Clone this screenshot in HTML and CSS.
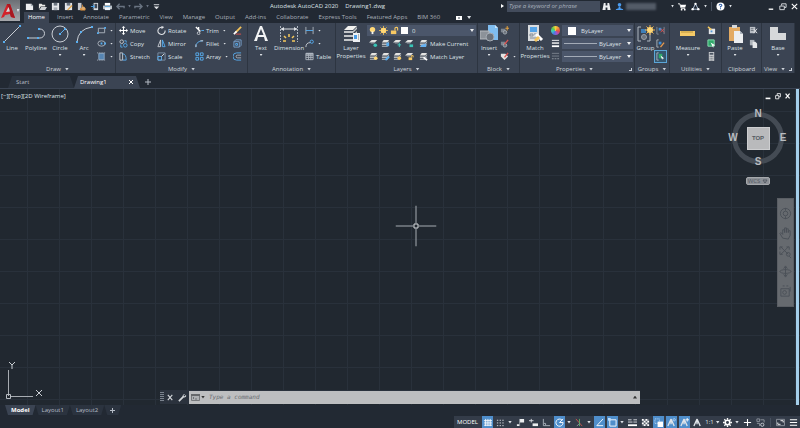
FILE: index.html
```html
<!DOCTYPE html>
<html lang="en">
<head>
  <meta charset="UTF-8" />
  <title>Autodesk AutoCAD 2020 - Drawing1.dwg</title>
  <meta name="viewport" content="width=device-width, initial-scale=1.0" />
  <link rel="stylesheet" href="styles.css">
</head>
<body>
  <!-- shared icons -->
  <svg class="sprite" aria-hidden="true">
    <symbol id="layers" viewBox="0 0 10 10">
      <path d="M3 1h6L7 4H1z" fill="#e4e4e2"/><path d="M1 5h6l2-3v1.500L7 7H1zM1 8h6l2-3v1L7 9H1z" fill="#b5b9bd"/>
    </symbol>
    <symbol id="sheet" viewBox="0 0 10 10">
      <path d="M3 1h6L6.500 4H0z" fill="#e4e4e2"/><path d="M2 4.500h4" stroke="#9aa0a8"/>
    </symbol>
    <symbol id="person" viewBox="0 0 10 10">
      <path d="M4.500 1 L1 9 M4.500 1 L8 9 M4.500 2v5" stroke="currentColor" stroke-width="1.500" fill="none"/>
    </symbol>
  </svg>

  <header class="top">
    <button class="app-button" aria-label="Application menu">
      <svg width="15" height="16" viewBox="0 0 15 16"><path d="M0 15 6 1h3l5 14-4-1-1-3-5 1-1 2z" fill="#d3222a"/><path d="M6 1h3l5 14-4-1z" fill="#a81820"/><path d="m5 9 2.500-5L9 8.500z" fill="#d8d8da"/></svg>
      <i class="caret"></i>
    </button>
    <div class="top-rows">
      <div class="title-bar">
        <div class="quick">
          <button aria-label="New"><svg viewBox="0 0 10 10"><path d="M1 2h6l2 2v5H1z" fill="#eceef0"/><path d="M7 2v2h2" stroke="#8e959e" fill="none"/></svg></button>
          <button aria-label="Open"><svg viewBox="0 0 10 10"><path d="M1 2h3l1 1h3v2H3L1 8z" fill="#e9e9e6"/><path d="M3.500 5.500H10L8 9H1.500z" fill="#cfd2d5"/></svg></button>
          <button aria-label="Save"><svg viewBox="0 0 10 10"><path d="M1 1h8v8H1z" fill="#e3e5e8"/><path d="M3 1h4v3H3z" fill="#6c7580"/><path d="M3 6h4v3H3z" fill="#a5abb3"/></svg></button>
          <button aria-label="Save as"><svg viewBox="0 0 10 10"><path d="M1 1h8v8H1z" fill="#e3e5e8"/><path d="M3 1h4v3H3z" fill="#6c7580"/><path d="m4 9 5-5" stroke="#e3a94f" stroke-width="1.500"/></svg></button>
          <button aria-label="Open from web"><svg viewBox="0 0 10 10"><path d="M1 1h4v8H1z" fill="#c6cacf"/><path d="M4 7h5v2H4zM6 3v3" fill="#d98f3d" stroke="#d98f3d"/><circle cx="7" cy="7" r="2" fill="#e0ab6b"/></svg></button>
          <button aria-label="Save to mobile"><svg viewBox="0 0 10 10"><path d="M4 1h5v8H4z" fill="#d6d9dc"/><path d="M5 2h3v5H5z" fill="#3d4653"/><path d="M1 5h4M3 3l2 2-2 2" stroke="#4ea4e8" fill="none"/></svg></button>
          <button aria-label="Plot"><svg viewBox="0 0 10 10"><path d="M2 1h6v3H2z" fill="#fff"/><path d="M0 4h10v4H0z" fill="#bac0c6"/><path d="M2 6h6v3H2z" fill="#f2f8ff"/><path d="M2 5h6" stroke="#5fa7df"/></svg></button>
          <button aria-label="Undo" class="dim"><svg viewBox="0 0 10 10"><path d="M4 2 1 5l3 3M1 5h8v2" stroke="currentColor" stroke-width="1.500" fill="none"/></svg></button>
          <i class="caret dim"></i>
          <button aria-label="Redo" class="dim"><svg viewBox="0 0 10 10"><path d="m6 2 3 3-3 3M9 5H1v2" stroke="currentColor" stroke-width="1.500" fill="none"/></svg></button>
          <i class="caret dim"></i>
          <button aria-label="Customize toolbar"><svg viewBox="0 0 10 10"><path d="M2 3h6" stroke="#dfe2e6"/><path d="M2 5h6L5 8z" fill="#dfe2e6"/></svg></button>
        </div>
        <div class="title"><span>Autodesk AutoCAD 2020</span><span>Drawing1.dwg</span></div>
        <div class="search">
          <i class="play"></i>
          <input type="text" placeholder="Type a keyword or phrase" aria-label="Search">
        </div>
        <div class="account">
          <button aria-label="Find"><svg viewBox="0 0 10 10"><path d="M2 1h2v3h2V1h2l1.500 8H6V6H4v3H.500z" fill="#eceef0"/></svg></button>
          <button aria-label="Account"><svg viewBox="0 0 10 10"><circle cx="5" cy="3" r="2" fill="#4b9cf0"/><path d="M4 5h2v2l3 1v1H1V8l3-1z" fill="#4b9cf0"/></svg></button>
          <span class="user-name"></span>
          <i class="caret"></i>
          <button aria-label="App store"><svg viewBox="0 0 10 10"><path d="M0 2h2l1.500 5H8" stroke="#fff" fill="none"/><path d="M2.500 3H9L8 6H3.500z" fill="#fff"/><circle cx="4" cy="8.500" r="1" fill="#fff"/><circle cx="7.500" cy="8.500" r="1" fill="#fff"/></svg></button>
          <button aria-label="Autodesk app"><svg viewBox="0 0 10 10"><path d="M5 2 2 8h6z" stroke="#c3d4ec" fill="none"/><circle cx="5" cy="2" r="1.300" fill="#fff"/><circle cx="1.800" cy="8" r="1.300" fill="#fff"/><circle cx="8.200" cy="8" r="1.300" fill="#fff"/></svg></button>
          <i class="caret"></i>
          <i class="divider"></i>
          <button aria-label="Help"><svg viewBox="0 0 10 10"><circle cx="5" cy="5" r="4.500" fill="#fff"/><path d="M3.500 4q0-1.500 1.500-1.500T6.500 4Q6.500 5 5 5v1M5 7v1" stroke="#2e5ea8" stroke-width="1.200" fill="none"/></svg></button>
          <i class="caret"></i>
        </div>
        <div class="window-buttons">
          <button aria-label="Minimize"><svg viewBox="0 0 10 10"><path d="M3 8h5" stroke="#fff" stroke-width="1.500"/></svg></button>
          <button aria-label="Restore"><svg viewBox="0 0 10 10"><path d="M2 4.500h5v4H2zM4 4V2h5v4H7" stroke="#dfe2e6" fill="none"/></svg></button>
          <button aria-label="Close"><svg viewBox="0 0 10 10"><path d="m2 2 6 6m0-6L2 8" stroke="#fff" stroke-width="1.200"/></svg></button>
        </div>
      </div>
      <nav class="menu">
        <a href="#" class="active">Home</a>
        <a href="#">Insert</a>
        <a href="#">Annotate</a>
        <a href="#">Parametric</a>
        <a href="#">View</a>
        <a href="#">Manage</a>
        <a href="#">Output</a>
        <a href="#">Add-ins</a>
        <a href="#">Collaborate</a>
        <a href="#">Express Tools</a>
        <a href="#">Featured Apps</a>
        <a href="#">BIM 360</a>
        <button aria-label="Ribbon display"><svg width="8" height="6" viewBox="0 0 8 6"><path d="M1 1h6v4H1z" fill="#fff"/><path d="M3 3h2" stroke="#3b4453"/></svg><i class="caret"></i></button>
      </nav>
    </div>
  </header>

  <section class="ribbon">
    <div class="panel draw">
      <div class="tools">
        <button class="big"><svg viewBox="0 0 18 18"><path d="M1 17 17 1" stroke="#c9ced5"/><path d="M0 16h2v2H0zM16 0h2v2h-2z" fill="#58aef0"/></svg>Line</button>
        <button class="big"><svg viewBox="0 0 18 18"><path d="M1 13h12a4 4 0 0 0 0-9" stroke="#c9ced5" fill="none"/><path d="M0 12h2v2H0zM10 12h2v2h-2zM11 3h2v2h-2z" fill="#58aef0"/></svg>Polyline</button>
        <button class="big"><svg viewBox="0 0 18 18"><circle cx="9" cy="9" r="8" stroke="#c9ced5" fill="none"/><path d="m9 9 5-5" stroke="#58aef0"/><path d="M8 8h2v2H8zM13 3h2v2h-2z" fill="#58aef0"/></svg>Circle<i class="caret"></i></button>
        <button class="big"><svg viewBox="0 0 18 18"><path d="M2 17Q3 4 17 2" stroke="#c9ced5" fill="none"/><path d="M1 16h2v2H1zM5 6h2v2H5zM16 1h2v2h-2z" fill="#58aef0"/></svg>Arc<i class="caret"></i></button>
        <div class="stack">
          <button aria-label="Rectangle"><svg viewBox="0 0 10 10"><path d="M1.500 2.500h7v5h-7z" stroke="#aeb6c0" fill="none"/><path d="M0 7h2v2H0zM8 1h2v2H8z" fill="#58aef0"/></svg><i class="caret"></i></button>
          <button aria-label="Ellipse"><svg viewBox="0 0 10 10"><ellipse cx="5" cy="5" rx="4" ry="3" stroke="#aeb6c0" fill="none"/><path d="M4 4h2v2H4zM8 4h2v2H8z" fill="#58aef0"/></svg><i class="caret"></i></button>
          <button aria-label="Hatch"><svg viewBox="0 0 10 10"><path d="M2 1.500h6v7H2z" fill="#5685b2" stroke="#8ba7c4"/><path d="M0 1h10M0 9h10" stroke="#aeb6c0" stroke-dasharray="1 1"/></svg><i class="caret"></i></button>
        </div>
      </div>
      <div class="panel-title">Draw<i class="caret"></i></div>
    </div>

    <div class="panel modify">
      <div class="tools">
        <div class="stack">
          <button><svg viewBox="0 0 10 10"><path d="M5 1v8M1 5h8" stroke="#fff" stroke-width="1.200"/><path d="m5 0 2 2H3zM5 10l2-2H3zM0 5l2-2v4zM10 5 8 3v4z" fill="#fff"/></svg>Move</button>
          <button><svg viewBox="0 0 10 10"><circle cx="3" cy="3" r="2" stroke="#c9ced5" fill="none"/><circle cx="7" cy="7" r="2" stroke="#58aef0" fill="none"/><path d="M6 2h2v2M2 6v3h2" stroke="#58aef0" fill="none"/></svg>Copy</button>
          <button><svg viewBox="0 0 10 10"><path d="M1 1h3v8H1z" stroke="#c9ced5" fill="none"/><path d="M4 2q4 0 4 7H4" stroke="#58aef0" fill="none"/></svg>Stretch</button>
        </div>
        <div class="stack">
          <button><svg viewBox="0 0 10 10"><path d="M6 1.500A4 4 0 1 0 9 5" stroke="#dfe2e6" stroke-width="1.200" fill="none"/><path d="M5 0v3.500L8 1z" fill="#dfe2e6"/></svg>Rotate</button>
          <button><svg viewBox="0 0 10 10"><path d="M4 1v7.500H1z" stroke="#c9ced5" fill="none"/><path d="M6 1v7.500h3z" stroke="#58aef0" fill="none"/></svg>Mirror</button>
          <button><svg viewBox="0 0 10 10"><path d="M1 1h8v8H1z" stroke="#7f92a9" fill="none"/><path d="M1 5h4v4H1z" stroke="#58aef0" fill="none"/><path d="m5 5 3-3" stroke="#dfe2e6"/></svg>Scale</button>
        </div>
        <div class="stack">
          <button><svg viewBox="0 0 10 10"><path d="m1 1 5 5M4 1v4" stroke="#fff" stroke-width="1.500"/><circle cx="4" cy="8" r="1.500" stroke="#c9ced5" fill="none"/><path d="M7 5h3" stroke="#58aef0"/></svg>Trim<i class="caret"></i></button>
          <button><svg viewBox="0 0 10 10"><path d="M1 9Q1 2 9 2" stroke="#58aef0" fill="none"/><path d="M1 6v3M6 2h3" stroke="#c9ced5"/></svg>Fillet<i class="caret"></i></button>
          <button><svg viewBox="0 0 10 10"><path d="M1 1h3v3H1zM6 1h3v3H6zM1 6h3v3H1zM6 6h3v3H6z" stroke="#58aef0" fill="none"/></svg>Array<i class="caret"></i></button>
        </div>
        <div class="stack">
          <button aria-label="Erase"><svg viewBox="0 0 10 10"><path d="m3 7 6-6" stroke="#f4c35a" stroke-width="2"/><path d="m1 9 3-3" stroke="#fff" stroke-width="2"/><path d="M3 9h6" stroke="#e0524f"/></svg></button>
          <button aria-label="Explode"><svg viewBox="0 0 10 10"><path d="M1 3h6v6H1zM1 3l2-2h6v6L7 9" stroke="#7aa4cf" fill="none"/><path d="M3 5h2v2H3z" stroke="#58aef0" fill="none"/></svg></button>
          <button aria-label="Offset"><svg viewBox="0 0 10 10"><path d="M9 1H4a4 4 0 0 0 0 8h5" stroke="#58aef0" fill="none"/><path d="M9 3.500H5a1.500 1.500 0 0 0 0 3h4" stroke="#aeb6c0" fill="none"/></svg></button>
        </div>
      </div>
      <div class="panel-title">Modify<i class="caret"></i></div>
    </div>

    <div class="panel annotation">
      <div class="tools">
        <button class="big"><svg viewBox="0 0 18 18"><path d="M8 1h2l6 15h-3l-1-4H6l-1 4H2zm1 3-2.500 6h5z" fill="#f3f4f5" fill-rule="evenodd"/></svg>Text<i class="caret"></i></button>
        <button class="big"><svg viewBox="0 0 18 18"><path d="M.500 1v16m17-16v16" stroke="#aeb6c0" stroke-dasharray="2 1"/><path d="M1 4h16" stroke="#dfe2e6"/><path d="m1 4 3-2v4zM17 4l-3-2v4z" fill="#dfe2e6"/><path d="M9 9v3M4 11l2 2m8-2-2 2M3 16h3m6 0h3" stroke="#f6c95c" stroke-width="1.500"/></svg>Dimension</button>
        <div class="stack">
          <button aria-label="Linear"><svg viewBox="0 0 10 10"><path d="M1 1v8M9 1v8" stroke="#aeb6c0"/><path d="M1 5h8" stroke="#58aef0"/></svg><i class="caret"></i></button>
          <button aria-label="Leader"><svg viewBox="0 0 10 10"><path d="M1 9q0-5 5-5" stroke="#c9ced5" fill="none"/><circle cx="7.500" cy="3" r="1.800" stroke="#58aef0" fill="none"/></svg><i class="caret"></i></button>
          <button><svg viewBox="0 0 10 10"><path d="M1 1.500h8v7H1zM1 4h8M1 6h8M4 2v7M6.500 2v7" stroke="#aeb6c0" fill="none"/><path d="M1 1h8v2H1z" fill="#aeb6c0"/></svg>Table</button>
        </div>
      </div>
      <div class="panel-title">Annotation<i class="caret"></i></div>
    </div>

    <div class="panel layers">
      <div class="tools">
        <button class="big"><svg viewBox="0 0 18 18"><path d="M6 1h9l-4 4H2z" fill="#f1f1ef"/><path d="M2 6h9l4-4v2l-4 4H2zM2 10h9l4-4v2l-4 4H2zM2 14h9l4-4v2l-4 4H2z" fill="#c2c5c8"/><path d="M11 8h7v9h-7z" fill="#eef1f4"/><path d="M12 10h3v4h-3z" fill="#4c9de6"/><path d="M16 10h1M16 12h1M16 14h1" stroke="#777"/></svg>Layer<br>Properties</button>
        <div class="layer-tools">
          <div class="combo layer-combo">
            <svg viewBox="0 0 10 10"><circle cx="5" cy="4" r="3" fill="#ffd877"/><path d="M4 6h2v3H4z" fill="#f3f3ef"/></svg>
            <svg viewBox="0 0 10 10"><path d="M5 0v10M0 5h10M1.500 1.500l7 7m0-7-7 7" stroke="#e5b54e"/><circle cx="5" cy="5" r="3" fill="#ffd877"/></svg>
            <svg viewBox="0 0 10 10"><path d="M1 5h6v4H1z" fill="#f7c963"/><path d="M5.500 5V2.500q0-1 1.500-1t1.500 1V5" stroke="#f7c963" stroke-width="1.200" fill="none"/></svg>
            <i class="swatch"></i>
            <select aria-label="Layer"><option>0</option></select>
          </div>
          <div class="icon-row">
            <button aria-label="Layer off"><svg viewBox="0 0 10 10"><use href="#sheet"/><circle cx="7" cy="7" r="2" fill="#39c4b6"/></svg></button>
            <button aria-label="Isolate"><svg viewBox="0 0 10 10"><use href="#layers"/><path d="M6 4h3v4H6z" fill="#58aef0"/></svg></button>
            <button aria-label="Freeze"><svg viewBox="0 0 10 10"><use href="#sheet"/><path d="M7 4v5M5 6.500h4" stroke="#42d2c4"/></svg></button>
            <button aria-label="Lock"><svg viewBox="0 0 10 10"><use href="#sheet"/><path d="M5 6h4v3H5z" fill="#39c4b6"/></svg></button>
            <button class="wide"><svg viewBox="0 0 10 10"><use href="#layers"/><path d="m2 7 6-2v4H2z" fill="#66b2f2"/></svg>Make Current</button>
          </div>
          <div class="icon-row">
            <button aria-label="Turn all on"><svg viewBox="0 0 10 10"><use href="#layers"/><circle cx="7.500" cy="7" r="2" fill="#ffd877"/></svg></button>
            <button aria-label="Unisolate"><svg viewBox="0 0 10 10"><use href="#layers"/><path d="m5 9 4-4" stroke="#58aef0" stroke-width="2"/></svg></button>
            <button aria-label="Thaw"><svg viewBox="0 0 10 10"><use href="#layers"/><circle cx="7" cy="7" r="2" fill="#f7c963"/></svg></button>
            <button aria-label="Unlock"><svg viewBox="0 0 10 10"><use href="#sheet"/><path d="M4 6h4v3H4z" fill="#f7c963"/><path d="M7 6V4h2v2" stroke="#f7c963" fill="none"/></svg></button>
            <button class="wide"><svg viewBox="0 0 10 10"><use href="#layers"/><path d="m5 6 4 3" stroke="#fff" stroke-width="2"/></svg>Match Layer</button>
          </div>
        </div>
      </div>
      <div class="panel-title">Layers<i class="caret"></i></div>
    </div>

    <div class="panel block">
      <div class="tools">
        <button class="big"><svg viewBox="0 0 18 18"><path d="M8 0h7l3 3v12H8z" fill="#7fbdf0"/><path d="M15 0v3h3" fill="#c9e3f9"/><path d="M0 6h9v8H0z" fill="#8c9299" stroke="#b6babf"/><circle cx="10" cy="12" r="4" fill="#6c737c" stroke="#a5abb3"/></svg>Insert<i class="caret"></i></button>
        <div class="stack">
          <button aria-label="Create block"><svg viewBox="0 0 10 10"><path d="M1 3h5v4H1z" fill="#7d858f"/><circle cx="5.500" cy="7" r="2" fill="#6c737c" stroke="#a5abb3"/><path d="M8 0v5M6 2.500h4" stroke="#f2a93d"/></svg></button>
          <button aria-label="Edit block"><svg viewBox="0 0 10 10"><path d="M1 3h5v4H1z" fill="#7d858f"/><circle cx="5.500" cy="7" r="2" fill="#6c737c" stroke="#a5abb3"/><path d="m5 6 4-5" stroke="#e0524f" stroke-width="1.500"/></svg></button>
          <button aria-label="Edit attributes"><svg viewBox="0 0 10 10"><path d="M1 2h5l3 3-4 4-4-4z" fill="#e4e4e2"/><path d="m5 6 4-5" stroke="#e0524f" stroke-width="1.500"/></svg><i class="caret"></i></button>
        </div>
      </div>
      <div class="panel-title">Block<i class="caret"></i></div>
    </div>

    <div class="panel properties">
      <div class="tools">
        <button class="big"><svg viewBox="0 0 18 18"><path d="M2 0h11v16H2z" fill="#d9dcdf"/><path d="M4 2h7v5H4z" fill="#55a4e8"/><path d="M4 9h3v2H4zM8 9h3M4 13h7" stroke="#858c95" fill="none"/><path d="m10 9 6 6" stroke="#fff" stroke-width="3"/><path d="m9 16 4-4" stroke="#f4c35a" stroke-width="3"/></svg>Match<br>Properties</button>
        <div class="property-rows">
          <div class="property-row">
            <i class="color-wheel"></i>
            <div class="combo"><i class="swatch"></i><select aria-label="Color"><option>ByLayer</option></select></div>
          </div>
          <div class="property-row">
            <svg viewBox="0 0 10 10"><path d="M1 1.500h8" stroke="#fff"/><path d="M1 4.500h8" stroke="#fff" stroke-width="1.500"/><path d="M1 8h8" stroke="#fff" stroke-width="2"/></svg>
            <div class="combo"><i class="line"></i><select aria-label="Lineweight"><option>ByLayer</option></select></div>
          </div>
          <div class="property-row">
            <svg viewBox="0 0 10 10"><path d="M1 1.500h8M1 4.500h8" stroke="#7d858f"/><path d="M1 7.500h8" stroke="#949ba4" stroke-dasharray="2 1"/></svg>
            <div class="combo"><i class="line"></i><select aria-label="Linetype"><option>ByLayer</option></select></div>
          </div>
        </div>
      </div>
      <div class="panel-title">Properties<i class="caret"></i><i class="launcher"></i></div>
    </div>

    <div class="panel groups">
      <div class="tools">
        <button class="big"><svg viewBox="0 0 18 18"><path d="M4 2H1v14h3M10 16h3V8" stroke="#aeb6c0" fill="none"/><path d="M4 4h5v4H4z" fill="#3f7fb8"/><circle cx="7" cy="12" r="2.500" fill="#6c737c" stroke="#9aa0a8"/><path d="M13 0v10M8 5h10M9.500 1.500l7 7m0-7-7 7" stroke="#f0b650"/><circle cx="13" cy="5" r="3" fill="#ffd877"/></svg>Group</button>
        <div class="stack">
          <button aria-label="Ungroup"><svg viewBox="0 0 10 10"><path d="M1 1v8h2M9 1v8" stroke="#7f8a98" fill="none"/><path d="M3 2h3v3H3z" fill="#3f8fd8"/><path d="m5 3 4 4m0-4L5 7" stroke="#e0524f"/></svg></button>
          <button aria-label="Group edit"><svg viewBox="0 0 10 10"><path d="M3 1H1v8h2" stroke="#aeb6c0" fill="none"/><path d="M3 3h3v3H3z" fill="#3f8fd8"/><path d="m5 9 4-5" stroke="#e89a4d" stroke-width="1.500"/></svg></button>
          <button aria-label="Group selection" class="on"><svg viewBox="0 0 10 10"><path d="M3 1H1v8h2" stroke="#aeb6c0" fill="none"/><path d="M3 2h4v5H3z" fill="#2fa86a"/><path d="m5 4 4 3-2 .500V9z" fill="#fff"/></svg></button>
        </div>
      </div>
      <div class="panel-title">Groups<i class="caret"></i></div>
    </div>

    <div class="panel utilities">
      <div class="tools">
        <button class="big"><svg viewBox="0 0 18 18"><path d="M1 6h15v5H1z" fill="#f5ca67"/><path d="M3 6v2m2-2v2m2-2v2m2-2v2m2-2v2m2-2v2" stroke="#a7812d" stroke-width=".7"/></svg>Measure<i class="caret"></i></button>
        <div class="stack">
          <button aria-label="Quick select"><svg viewBox="0 0 10 10"><path d="M2 3h7v6H2z" fill="#e3e5e8"/><path d="m1 1 4 3" stroke="#f6c95c" stroke-width="1.500"/><path d="M4 5h2v2H4z" fill="#4f96d6"/></svg></button>
          <button aria-label="Select all"><svg viewBox="0 0 10 10"><path d="M1 1h7v7H1z" fill="#2fa86a" stroke="#8de0b4"/><path d="m4 4 5 3-2 .500V10z" fill="#fff"/></svg></button>
          <button aria-label="Calculator"><svg viewBox="0 0 10 10"><path d="M2 0h6v10H2z" fill="#c4c7cb"/><path d="M3 1h4v2H3z" fill="#4b5563"/><path d="M3 5h4M3 7h4M3 9h4" stroke="#6c737c" stroke-dasharray="1 .500"/></svg></button>
        </div>
      </div>
      <div class="panel-title">Utilities<i class="caret"></i></div>
    </div>

    <div class="panel clipboard">
      <div class="tools">
        <button class="big"><svg viewBox="0 0 18 18"><path d="M3 2h11v14H3z" fill="#e3aa62"/><path d="M6 0h5v3H6z" fill="#d6d9dc"/><path d="M8 6h6l3 3v9H8z" fill="#eceef0"/><path d="M14 6v3h3" fill="#aeb6c0"/></svg>Paste<i class="caret"></i></button>
        <div class="stack">
          <button aria-label="Cut"><svg viewBox="0 0 10 10"><path d="M1 1h6v7H1z" fill="#b9bec5"/><path d="m5 3 4 5m0-5L5 8" stroke="#e6e8ea"/><path d="M2 3h3M2 5h3" stroke="#6c737c"/></svg></button>
          <button aria-label="Copy clip"><svg viewBox="0 0 10 10"><path d="M1 1h5v6H1z" fill="#aeb4bb"/><path d="M4 3h3l2 2v5H4z" fill="#e6e8ea"/></svg></button>
        </div>
      </div>
      <div class="panel-title">Clipboard</div>
    </div>

    <div class="panel view">
      <div class="tools">
        <button class="big"><svg viewBox="0 0 18 18"><path d="M1 2h8v6h8v7H1z" fill="#d6d8da"/></svg>Base<i class="caret"></i></button>
      </div>
      <div class="panel-title">View<i class="caret"></i><i class="launcher"></i></div>
    </div>
  </section>

  <nav class="file-tabs">
    <a href="#" class="file-tab">Start</a>
    <a href="#" class="file-tab active">Drawing1 <svg width="6" height="6" viewBox="0 0 6 6"><path d="m1 1 4 4m0-4L1 5" stroke="currentColor"/></svg></a>
    <button aria-label="New drawing"><svg width="6" height="6" viewBox="0 0 6 6"><path d="M3 0v6M0 3h6" stroke="currentColor"/></svg></button>
  </nav>

  <main class="canvas">
    <div class="view-label">[−][Top][2D Wireframe]</div>
    <div class="doc-buttons">
      <button aria-label="Minimize drawing"><svg viewBox="0 0 10 10"><path d="M2 8h6" stroke="#fff" stroke-width="2"/></svg></button>
      <button aria-label="Restore drawing"><svg viewBox="0 0 10 10"><path d="M2 4.500h4v4H2zM4 4V2h4v4H6" stroke="#fff" fill="none"/></svg></button>
      <button aria-label="Close drawing"><svg viewBox="0 0 10 10"><path d="m2 2 5 6m0-6L2 8" stroke="#fff" stroke-width="1.500"/></svg></button>
    </div>

    <div class="view-cube">
      <span class="north">N</span><span class="west">W</span><button>TOP</button><span class="east">E</span><span class="south">S</span>
    </div>
    <button class="wcs">WCS <svg width="6" height="5" viewBox="0 0 6 5"><path d="M1 1h4L3 4z" stroke="currentColor" fill="none"/></svg></button>

    <div class="nav-bar">
      <button aria-label="Wheel"><svg viewBox="0 0 14 14"><circle cx="7" cy="7" r="5.500"/><circle cx="7" cy="7" r="2.500"/><path d="M7 1v3M7 10v3"/></svg></button>
      <button aria-label="Pan"><svg viewBox="0 0 14 14"><path d="M4 12 1 7l1-1 2 2V3h2v3-5h2v5-4h2v4-2h2v5l-2 4z"/></svg></button>
      <button aria-label="Zoom"><svg viewBox="0 0 14 14"><path d="m2 1 8 8M10 1 2 9M1 4V1h3M8 1h3v3M1 6v3h3"/><circle cx="10" cy="9" r="2"/><path d="m11 11 2 2"/></svg></button>
      <button aria-label="Orbit"><svg viewBox="0 0 14 14"><ellipse cx="7" cy="7" rx="6" ry="2"/><path d="M7 2v10M5 4l2-3 2 3M5 10l2 3 2-3"/></svg></button>
      <button aria-label="Show motion"><svg viewBox="0 0 14 14"><path d="M2 4h9v8H2z"/><circle cx="6" cy="8" r="2"/><path d="M4 1h2M8 1h2M12 2v5"/></svg></button>
    </div>

    <svg class="crosshair" width="41" height="41" viewBox="0 0 41 41"><path d="M20.500 0v18m0 5v18M0 20.500h18m5 0h18" stroke="#a7acb2"/><path d="M18.500 18.500h4v4h-4z" stroke="#d7dadd" fill="none"/></svg>
    <svg class="ucs" width="40" height="40" viewBox="0 0 40 40"><path d="M3.500 8v26M6 34.500h22" stroke="#a7acb2"/><path d="M1.500 32.500h4v4h-4z" stroke="#b9bec4" fill="none"/><path d="m4 0 3 3 3-3M7 3v4M31 28l6 6m0-6-6 6" stroke="#c9ced3" fill="none"/></svg>

    <div class="command">
      <i class="grip"></i>
      <button aria-label="Close command line"><svg viewBox="0 0 10 10"><path d="m2 2 5 6m0-6L2 8" stroke="#d6d9dc" stroke-width="1.200"/></svg></button>
      <button aria-label="Customize command line"><svg viewBox="0 0 10 10"><path d="m1 9 5-5" stroke="#d6d9dc" stroke-width="1.800"/><path d="M9 2 7 4 6 3l2-2q-3 0-3 3 2 2 4 0z" fill="#d6d9dc"/></svg></button>
      <div class="command-box">
        <svg width="9" height="7" viewBox="0 0 9 7"><path d="M.500.500h8v6h-8z" fill="#aeb0b3" stroke="#77797c"/><path d="M0 1h9" stroke="#66686b" stroke-width="2"/><path d="m2 3 1 1-1 1M4 5h2" stroke="#55575a" stroke-width=".7" fill="none"/></svg>
        <i class="caret"></i>
        <input type="text" placeholder="Type a command" aria-label="Command">
        <i class="caret up"></i>
      </div>
    </div>
  </main>

  <footer>
    <nav class="layout-tabs">
      <a href="#" class="active">Model</a>
      <a href="#">Layout1</a>
      <a href="#">Layout2</a>
      <button aria-label="New layout"><svg width="5" height="5" viewBox="0 0 5 5"><path d="M2.500 0v5M0 2.500h5" stroke="currentColor"/></svg></button>
    </nav>
    <div class="status-bar">
      <button class="model">MODEL</button>
      <button class="on" aria-label="Grid"><svg viewBox="0 0 10 10"><path d="M3 1v8M5.500 1v8M8 1v8M1 3h9M1 5.500h9M1 8h9" stroke="#fff"/></svg></button>
      <button aria-label="Snap"><svg viewBox="0 0 10 10"><path d="M1 2.500h8M1 5.500h8M1 8.500h8" stroke="#dfe2e6" stroke-dasharray="1.500 1.500"/></svg></button>
      <i class="caret"></i>
      <button aria-label="Infer"><svg viewBox="0 0 10 10"><path d="M4 1h5v4H4zM1 7h3v2H1z" fill="#eceef0"/><path d="M4 1v8" stroke="#8e959e"/></svg></button>
      <button aria-label="Dynamic input"><svg viewBox="0 0 10 10"><path d="M2.500 1v4M0 3h5" stroke="#dfe2e6"/><path d="M4 6h6v3H4z" fill="#eceef0"/></svg></button>
      <button aria-label="Ortho"><svg viewBox="0 0 10 10"><path d="M1.500 1v7.500H9M2 6h2v2" stroke="#aeb6c0" fill="none"/></svg></button>
      <button class="on" aria-label="Polar"><svg viewBox="0 0 10 10"><path d="M8 2.500A4 4 0 1 0 9 5H5l4-4" stroke="#fff" fill="none"/></svg></button>
      <i class="caret"></i>
      <button aria-label="Isodraft"><svg viewBox="0 0 10 10"><path d="m1 1 7 8" stroke="#c9584f"/><path d="M5 1v8" stroke="#57ad65"/><path d="m2 9 3-3" stroke="#8e959e"/></svg></button>
      <i class="caret"></i>
      <button class="on" aria-label="Tracking"><svg viewBox="0 0 10 10"><path d="M9 1 2 8.500h7" stroke="#fff" fill="none"/></svg></button>
      <button class="on" aria-label="Object snap"><svg viewBox="0 0 10 10"><path d="M2 2h7v7H2z" stroke="#fff" fill="none"/><path d="M0 0h3v3H0z" fill="#b9dcff"/></svg></button>
      <i class="caret"></i>
      <button aria-label="Lineweight"><svg viewBox="0 0 10 10"><path d="M0 2h4M6 2h4M0 4.500h5M6 4.500h4" stroke="#dfe2e6"/><path d="M0 8h10" stroke="#fff" stroke-width="2"/></svg></button>
      <button aria-label="Transparency"><svg viewBox="0 0 10 10"><path d="M1 1h8v8H1z" fill="#59616d"/><path d="M1 1h2v2H1zM5 1h2v2H5zM3 3h2v2H3zM7 3h2v2H7zM1 5h2v2H1zM5 5h2v2H5zM3 7h2v2H3zM7 7h2v2H7z" fill="#fff"/></svg></button>
      <button class="on" aria-label="Selection cycling"><svg viewBox="0 0 10 10"><path d="M1 1h5v5H1z" stroke="#cfe6fb" stroke-dasharray="1 1" fill="none"/><path d="M4 4h6v6H4z" fill="#fff"/></svg></button>
      <button class="on" aria-label="Annotation visibility"><svg viewBox="0 0 10 10"><use href="#person"/><circle cx="8" cy="2" r="1.300" stroke="#d7eaff" stroke-width=".7" fill="none"/></svg></button>
      <button class="on" aria-label="Auto scale"><svg viewBox="0 0 10 10"><use href="#person"/><path d="M8 0v4M6 2h4" stroke="#fff"/></svg></button>
      <button aria-label="Annotation scale"><svg viewBox="0 0 10 10"><use href="#person"/></svg></button>
      <button class="scale">1:1<i class="caret"></i></button>
      <button aria-label="Workspace"><svg viewBox="0 0 10 10"><circle cx="5" cy="5" r="2.500" stroke="#fff" stroke-width="1.700" fill="none"/><path d="M5 0v2M5 8v2M0 5h2M8 5h2M1.500 1.500 3 3M7 7l1.500 1.500M8.500 1.500 7 3M3 7 1.500 8.500" stroke="#fff" stroke-width="1.500"/></svg></button>
      <i class="caret"></i>
      <button aria-label="Annotation monitor"><svg viewBox="0 0 10 10"><path d="M5 1v8M1 5h8" stroke="#fff" stroke-width="1.200"/></svg></button>
      <button aria-label="Isolate objects"><svg viewBox="0 0 10 10"><path d="M1 1h3v3H1zM5 2h4v3M1 6h3v3" stroke="#8e959e" fill="none"/><circle cx="7" cy="7.500" r="1.800" stroke="#c9ced5" fill="none"/></svg></button>
      <i class="divider"></i>
      <button aria-label="Clean screen"><svg viewBox="0 0 10 10"><path d="M.500 1.500h9v7h-9z" stroke="#8e959e" fill="none"/><path d="M5 3h3v2M2 5v2h3" stroke="#fff" fill="none"/></svg></button>
      <button aria-label="Customization"><svg viewBox="0 0 10 10"><path d="M1 2h8M1 5h8M1 8h8" stroke="#fff" stroke-width="1.200"/></svg></button>
    </div>
  </footer>
</body>
</html>
```
FILE: styles.css
```css
* {
  box-sizing: border-box;
}

body {
  margin: 0;
  min-height: 100vh;
  display: flex;
  flex-direction: column;
  background-color: #222933;
  color: #dfe3e8;
  font-family: "Open Sans", "Noto Sans", sans-serif;
  font-size: 6px;
  line-height: 8px;
  overflow: hidden;
}

button,
input,
select {
  font: inherit;
  color: inherit;
  margin: 0;
  padding: 0;
  border: 0;
  background: none;
}

button {
  display: flex;
  align-items: center;
  justify-content: center;
  white-space: nowrap;
}

a {
  color: inherit;
  text-decoration: none;
}

svg {
  flex: none;
  display: block;
}

.sprite {
  position: absolute;
  width: 0;
  height: 0;
}

.caret {
  flex: none;
  width: 4px;
  height: 3px;
  background-color: currentColor;
  clip-path: polygon(0 0, 100% 0, 50% 100%);
}

.caret.up {
  clip-path: polygon(0 100%, 100% 100%, 50% 0);
}

.dim {
  color: #697381;
}

.divider {
  width: 1px;
  height: 9px;
  background-color: #48515f;
}

/* title bar and menu */

.top {
  display: flex;
  height: 23px;
}

.app-button {
  width: 20px;
  height: 21px;
  gap: 1px;
  background: linear-gradient(#6c6f75, #a6a8ac);
}

.app-button .caret {
  width: 3px;
}

.top-rows {
  flex: 1;
  min-width: 0;
}

.title-bar {
  display: flex;
  align-items: center;
  height: 12px;
}

.title-bar svg {
  width: 9px;
  height: 9px;
}

.quick {
  display: flex;
  align-items: center;
  padding-left: 3px;
  width: 250px;
}

.quick button {
  width: 13px;
}

.quick .caret {
  width: 3px;
  margin: 0 1px;
}

.title {
  display: flex;
  gap: 7px;
  flex: 1;
  white-space: nowrap;
}

.search {
  display: flex;
  align-items: center;
  gap: 3px;
  width: 99px;
}

.search .play {
  width: 3px;
  height: 4px;
  background-color: #fff;
  clip-path: polygon(0 0, 100% 50%, 0 100%);
}

.search input {
  flex: 1;
  min-width: 0;
  height: 11px;
  padding: 0 2px;
  background-color: #434c5c;
  font-style: italic;
}

.search input::placeholder {
  color: #a9b1bc;
}

.account {
  display: flex;
  align-items: center;
  width: 164px;
}

.account button {
  width: 13px;
}

.account .caret {
  width: 3px;
  margin: 0 2px;
}

.account .divider {
  margin: 0 2px;
}

.user-name {
  width: 30px;
  height: 7px;
  margin-right: 13px;
  background-color: #535b67;
  filter: blur(1px);
}

.window-buttons {
  display: flex;
}

.window-buttons button {
  width: 12px;
}

.menu {
  display: flex;
  align-items: center;
  gap: 6px;
  height: 11px;
  padding-left: 4px;
  color: #a9b0ba;
}

.menu a {
  padding: 1px 2px;
  height: 11px;
}

.menu .active {
  padding: 1px 4px;
  color: #fff;
  background-color: #3b4453;
}

.menu button {
  gap: 4px;
  margin-left: 7px;
  color: #dfe3e8;
}

/* ribbon */

.ribbon {
  display: flex;
  height: 50px;
  padding-right: 5px;
}

.panel {
  display: flex;
  flex-direction: column;
  background-color: #3b4453;
  border-right: 1px solid #2d3541;
}

.tools {
  display: flex;
  gap: 2px;
  height: 42px;
  padding: 1px 1px 0;
}

.panel-title {
  display: flex;
  align-items: center;
  justify-content: center;
  gap: 4px;
  height: 8px;
  color: #cdd2d9;
}

.launcher {
  width: 3px;
  height: 3px;
  border: solid #cdd2d9;
  border-width: 0 1px 1px 0;
}

.big {
  flex-direction: column;
  justify-content: flex-start;
  width: 24px;
  padding-top: 1px;
}

.big svg {
  width: 18px;
  height: 18px;
  margin-bottom: 1px;
}

.big .caret {
  width: 3px;
  height: 2px;
  margin-top: 2px;
}

.stack {
  display: flex;
  flex-direction: column;
}

.stack button {
  justify-content: flex-start;
  gap: 2px;
  height: 13px;
}

.stack svg,
.icon-row svg,
.property-row svg,
.combo svg {
  width: 9px;
  height: 9px;
}

.stack .caret {
  width: 3px;
  height: 2px;
  margin-left: 2px;
}

.stack .on {
  width: 13px;
  justify-content: center;
  margin-left: -2px;
  background-color: #35566e;
  outline: 1px solid #5ba6d8;
  outline-offset: -1px;
}

.draw {
  width: 116px;
}

.draw .tools {
  gap: 0;
  padding-left: 0;
}

.draw .stack {
  margin-left: 1px;
}

.modify {
  width: 132px;
}

.modify .tools {
  gap: 0;
  padding-left: 3px;
}

.modify .stack {
  width: 38px;
}

.modify .stack:last-child {
  width: 12px;
}

.annotation {
  width: 88px;
}

.annotation .big:nth-child(2) {
  width: 28px;
}

.layers {
  width: 142px;
}

.layers .big,
.properties .big {
  width: 28px;
}

.layer-tools {
  flex: 1;
  min-width: 0;
}

.combo {
  display: flex;
  align-items: center;
  position: relative;
  flex: 1;
  min-width: 0;
  height: 11px;
  margin: 1px 0;
  background-color: #4b566a;
}

.combo::after {
  content: "";
  position: absolute;
  right: 2px;
  top: 4px;
  width: 4px;
  height: 3px;
  background-color: #eceef0;
  clip-path: polygon(0 0, 100% 0, 50% 100%);
  pointer-events: none;
}

.combo select {
  flex: 1;
  min-width: 0;
  height: 11px;
  padding-left: 2px;
  appearance: none;
}

.swatch {
  flex: none;
  width: 8px;
  height: 8px;
  background-color: #fff;
}

.layer-combo {
  padding-left: 1px;
  gap: 2px;
}

.layer-combo .swatch {
  width: 7px;
  height: 7px;
}

.icon-row {
  display: flex;
  height: 13px;
}

.icon-row button {
  width: 12px;
}

.icon-row .wide {
  width: auto;
  gap: 2px;
  margin-left: 4px;
}

.block {
  width: 42px;
}

.block .tools {
  gap: 1px;
}

.block .big {
  width: 20px;
}

.properties {
  width: 115px;
}

.property-rows {
  flex: 1;
  min-width: 0;
}

.property-row {
  display: flex;
  align-items: center;
  gap: 2px;
  height: 13px;
}

.color-wheel {
  width: 9px;
  height: 9px;
  border-radius: 50%;
  background: conic-gradient(#f4d03c, #f08a3c, #e34b4b, #a653c9, #4b79e3, #3cc9c0, #62c94b, #f4d03c);
}

.property-row .swatch {
  margin: 0 3px 0 6px;
}

.property-row .line {
  width: 33px;
  height: 1px;
  margin-left: 2px;
  background-color: #a3abb7;
}

.properties .launcher {
  margin: 0 2px 0 auto;
}

.properties .panel-title {
  padding-left: 36px;
}

.groups {
  width: 35px;
}

.groups .tools {
  gap: 0;
}

.groups .big {
  width: 19px;
}

.groups .stack {
  margin-left: 1px;
}

.utilities {
  width: 52px;
}

.utilities .big {
  width: 34px;
}

.clipboard {
  width: 40px;
}

.view {
  flex: 1;
}

.view .tools {
  justify-content: center;
}

/* drawing tabs */

.file-tabs {
  display: flex;
  align-items: flex-end;
  height: 16px;
  padding-left: 8px;
  border-bottom: 1px solid #3b4453;
  color: #b5bcc6;
}

.file-tab {
  width: 66px;
  height: 12px;
  padding: 2px 8px;
  background-color: #2b333f;
  clip-path: polygon(4px 0, calc(100% - 4px) 0, 100% 100%, 0 100%);
}

.file-tab.active {
  display: flex;
  align-items: center;
  justify-content: space-between;
  color: #fff;
  background-color: #3b4453;
  padding: 0 6px;
}

.file-tabs button {
  width: 16px;
  height: 12px;
}

/* drawing area */

.canvas {
  position: relative;
  flex: 1;
  min-height: 200px;
  background-color: #212830;
  background-image: linear-gradient(90deg, #29313b 1px, transparent 1px), linear-gradient(#29313b 1px, transparent 1px);
  background-size: 32px 32px;
  background-position: 27px 22px;
}

.canvas::after {
  content: "";
  position: absolute;
  top: 0;
  right: 1px;
  bottom: 0;
  width: 3px;
  background-color: #a5cfea;
}

.view-label {
  padding: 3px 1px;
}

.doc-buttons {
  position: absolute;
  top: 3px;
  right: 7px;
  display: flex;
}

.doc-buttons button {
  width: 10px;
}

.doc-buttons svg {
  width: 8px;
  height: 8px;
}

.view-cube {
  position: absolute;
  top: 18px;
  right: 10px;
  display: grid;
  grid-template-columns: 14px 36px 14px;
  grid-template-rows: 14px 34px 14px;
  place-items: center;
  color: #b9bcc0;
  font-family: "Liberation Sans", sans-serif;
  font-size: 10px;
  font-weight: bold;
  line-height: 12px;
}

.view-cube::before {
  content: "";
  position: absolute;
  inset: 5px 6px;
  border: 5px solid #444b54;
  border-radius: 50%;
}

.view-cube > * {
  position: relative;
}

.north,
.south {
  grid-column: 2;
}

.west {
  grid-column: 1;
}

.view-cube button {
  width: 23px;
  height: 23px;
  background-color: #b9babc;
  border: 1px solid #cdced0;
  color: #555a61;
  font-size: 6px;
}

.wcs {
  position: absolute;
  top: 88px;
  right: 30px;
  width: 24px;
  height: 8px;
  gap: 2px;
  border: 1px solid #a5a8ac;
  border-radius: 2px;
  background-color: #8c9096;
  color: #555b64;
}

.nav-bar {
  position: absolute;
  top: 109px;
  right: 6px;
  display: flex;
  flex-direction: column;
  align-items: center;
  justify-content: space-around;
  width: 17px;
  height: 109px;
  padding: 5px 0;
  background-color: #666a6f;
  border: 1px solid #5a5e64;
}

.nav-bar svg {
  width: 13px;
  height: 13px;
  fill: none;
  stroke: #4b5057;
}

.crosshair {
  position: absolute;
  left: 52%;
  top: 137px;
  transform: translate(-50%, -50%);
}

.ucs {
  position: absolute;
  left: 5px;
  bottom: 3px;
}

.command {
  position: absolute;
  left: 20%;
  right: 20%;
  bottom: 1px;
  display: flex;
  align-items: center;
  height: 14px;
  background-color: #2b323d;
}

.command button {
  width: 12px;
}

.command button svg {
  width: 9px;
  height: 9px;
}

.grip {
  width: 4px;
  height: 10px;
  background: repeating-linear-gradient(#7a828d 0 1px, transparent 1px 2px);
}

.command-box {
  flex: 1;
  display: flex;
  align-items: center;
  gap: 1px;
  height: 13px;
  margin-left: 1px;
  padding: 0 3px 0 2px;
  background-color: #bdbec0;
  color: #333;
}

.command-box input {
  flex: 1;
  min-width: 0;
  padding-left: 3px;
  font-family: "DejaVu Sans Mono", monospace;
  font-size: 6px;
  font-style: italic;
}

.command-box input::placeholder {
  color: #686b70;
}

/* layout tabs and status bar */

.layout-tabs {
  display: flex;
  height: 11px;
  padding-left: 5px;
  color: #b5bcc6;
}

.layout-tabs a,
.layout-tabs button {
  height: 10px;
  padding: 1px 6px;
  background-color: #2b333f;
  clip-path: polygon(0 0, 100% 0, calc(100% - 3px) 100%, 3px 100%);
}

.layout-tabs .active {
  color: #fff;
  font-weight: bold;
  background-color: #3b4453;
}

.status-bar {
  display: flex;
  align-items: center;
  width: fit-content;
  height: 12px;
  margin-left: auto;
  background-color: #343c49;
}

.status-bar button {
  width: 13px;
  height: 12px;
}

.status-bar svg {
  width: 9px;
  height: 9px;
}

.status-bar .model {
  width: 27px;
  color: #fff;
}

.status-bar .on {
  width: 11px;
  margin: 0 1px;
  background-color: #4f8ecb;
}

.status-bar > .caret {
  margin: 0 2px 0 1px;
}

.status-bar .scale {
  width: 17px;
  gap: 2px;
}

.status-bar .divider {
  margin: 0 3px;
}
```
